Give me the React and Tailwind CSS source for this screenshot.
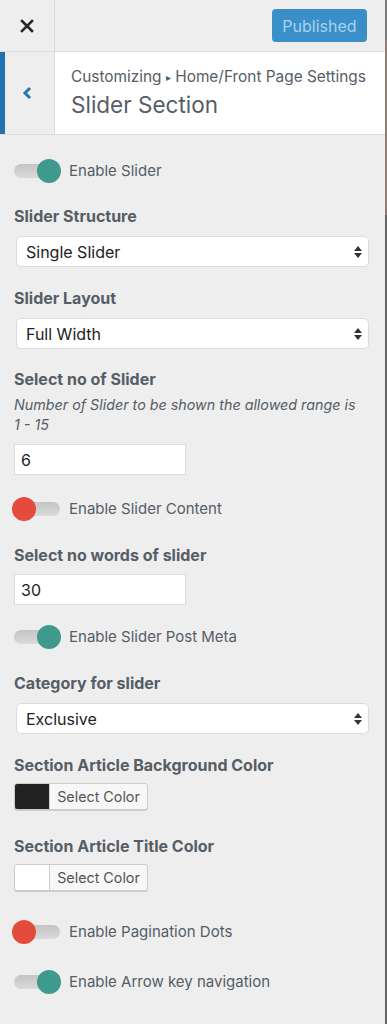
import React from 'react';

const font = { fontFamily: 'Inter, "Liberation Sans", Arial, sans-serif' };

const Toggle = ({ on, label }) => (
    <div className="flex items-center h-[26px]">
        <div className="relative w-[48px] h-[26px] ml-[12px]">
            <div className="absolute left-[2px] right-[0px] top-[6px] h-[14px] rounded-full bg-gradient-to-b from-[#c4c4c4] to-[#dadada]"></div>
            {on ? (
                <div className="absolute right-[-1px] top-[1px] w-[24px] h-[24px] rounded-full bg-[#3e9a8c]"></div>
            ) : (
                <div className="absolute left-[0px] top-[1px] w-[24px] h-[24px] rounded-full bg-[#e54b3c]"></div>
            )}
        </div>
        <span className="ml-[9px] text-[15px] text-[#555d66]">{label}</span>
    </div>
);

const Label = ({ children }) => (
    <div className="text-[16px] font-bold text-[#555d66] leading-[20px]">{children}</div>
);

const Select = ({ value }) => (
    <div className="mt-[10px] mx-[2px] h-[31px] bg-white border border-[#dcdcdc] rounded-[5px] flex items-center justify-between pl-[9px] pr-[6px]">
        <span className="text-[16px] text-[#222]">{value}</span>
        <svg width="8" height="12" viewBox="0 0 8 12">
            <path d="M4 0 L8 5 L0 5 Z" fill="#333" />
            <path d="M0 7 L8 7 L4 12 Z" fill="#333" />
        </svg>
    </div>
);

const NumberInput = ({ value }) => (
    <div className="mt-[9px] w-[172px] h-[31px] bg-white border border-[#dddddd] flex items-center pl-[6px]">
        <span className="text-[16px] text-[#222]">{value}</span>
    </div>
);

const ColorPick = ({ swatch }) => (
    <div className="mt-[8px] w-[134px] h-[27px] flex border border-[#cccccc] rounded-[3px] bg-[#f7f7f7] overflow-hidden shadow-[0_1px_0_#cccccc]">
        <div className={`w-[35px] h-full border-r border-[#cccccc] ${swatch}`}></div>
        <div className="flex-1 flex items-center justify-center text-[14.3px] text-[#555]">Select Color</div>
    </div>
);

export default function App() {
    return (
        <div className="w-[387px] h-[1024px] flex bg-[#eeeeee] overflow-hidden" style={font}>
            <div className="w-[385px] flex flex-col">
                {/* top bar */}
                <div className="h-[52px] flex border-b border-[#dddddd]">
                    <div className="w-[55px] flex items-center justify-center border-r border-[#dddddd]">
                        <svg width="14" height="14" viewBox="0 0 14 14">
                            <path d="M2 2 L12 12 M12 2 L2 12" stroke="#23282d" strokeWidth="2.6" strokeLinecap="square" />
                        </svg>
                    </div>
                    <div className="flex-1 flex items-center justify-end pr-[18px]">
                        <div className="w-[95px] h-[33px] rounded-[4px] bg-[#3a8fc9] flex items-center justify-center text-[16px] text-[#a9d2ee]">
                            Published
                        </div>
                    </div>
                </div>

                {/* section header */}
                <div className="h-[83px] flex border-b border-[#dddddd]">
                    <div className="w-[5px] bg-[#2271b1]"></div>
                    <div className="w-[50px] flex items-center justify-center pr-[6px] border-r border-[#dddddd]">
                        <svg width="10" height="14" viewBox="0 0 10 14">
                            <path d="M8 2 L3 7 L8 12" stroke="#2a77ae" strokeWidth="3" fill="none" />
                        </svg>
                    </div>
                    <div className="flex-1 bg-white pl-[16px] pt-[15px]">
                        <div className="text-[15.4px] text-[#555d66] leading-[20px]">
                            Customizing <span className="text-[10px] align-[1px]">▸</span> Home/Front Page Settings
                        </div>
                        <div className="text-[22.5px] text-[#555d66] leading-[30px] mt-[3px]">Slider Section</div>
                    </div>
                </div>

                {/* controls */}
                <div className="px-[14px] pt-[23px] flex flex-col">
                    <div className="-ml-[14px]"><Toggle on label="Enable Slider" /></div>

                    <div className="mt-[22px]"><Label>Slider Structure</Label></div>
                    <Select value="Single Slider" />

                    <div className="mt-[21px]"><Label>Slider Layout</Label></div>
                    <Select value="Full Width" />

                    <div className="mt-[20px]"><Label>Select no of Slider</Label></div>
                    <div className="mt-[6px] text-[14.3px] italic text-[#555d66] leading-[20px]">
                        Number of Slider to be shown the allowed range is 1&nbsp;-&nbsp;15
                    </div>
                    <NumberInput value="6" />

                    <div className="-ml-[14px] mt-[21px]"><Toggle label="Enable Slider Content" /></div>

                    <div className="mt-[23px]"><Label>Select no words of slider</Label></div>
                    <NumberInput value="30" />

                    <div className="-ml-[14px] mt-[19px]"><Toggle on label="Enable Slider Post Meta" /></div>

                    <div className="mt-[23px]"><Label>Category for slider</Label></div>
                    <Select value="Exclusive" />

                    <div className="mt-[21px]"><Label>Section Article Background Color</Label></div>
                    <ColorPick swatch="bg-[#222222]" />

                    <div className="mt-[26px]"><Label>Section Article Title Color</Label></div>
                    <ColorPick swatch="bg-white" />

                    <div className="-ml-[14px] mt-[28px]"><Toggle label="Enable Pagination Dots" /></div>

                    <div className="-ml-[14px] mt-[24px]"><Toggle on label="Enable Arrow key navigation" /></div>
                </div>
            </div>
            <div className="w-[2px] flex flex-col">
                <div className="h-[40px] bg-[#7d7d7d]"></div>
                <div className="h-[175px] bg-[#8d807b]"></div>
                <div className="flex-1 bg-[#666666]"></div>
            </div>
        </div>
    );
}
